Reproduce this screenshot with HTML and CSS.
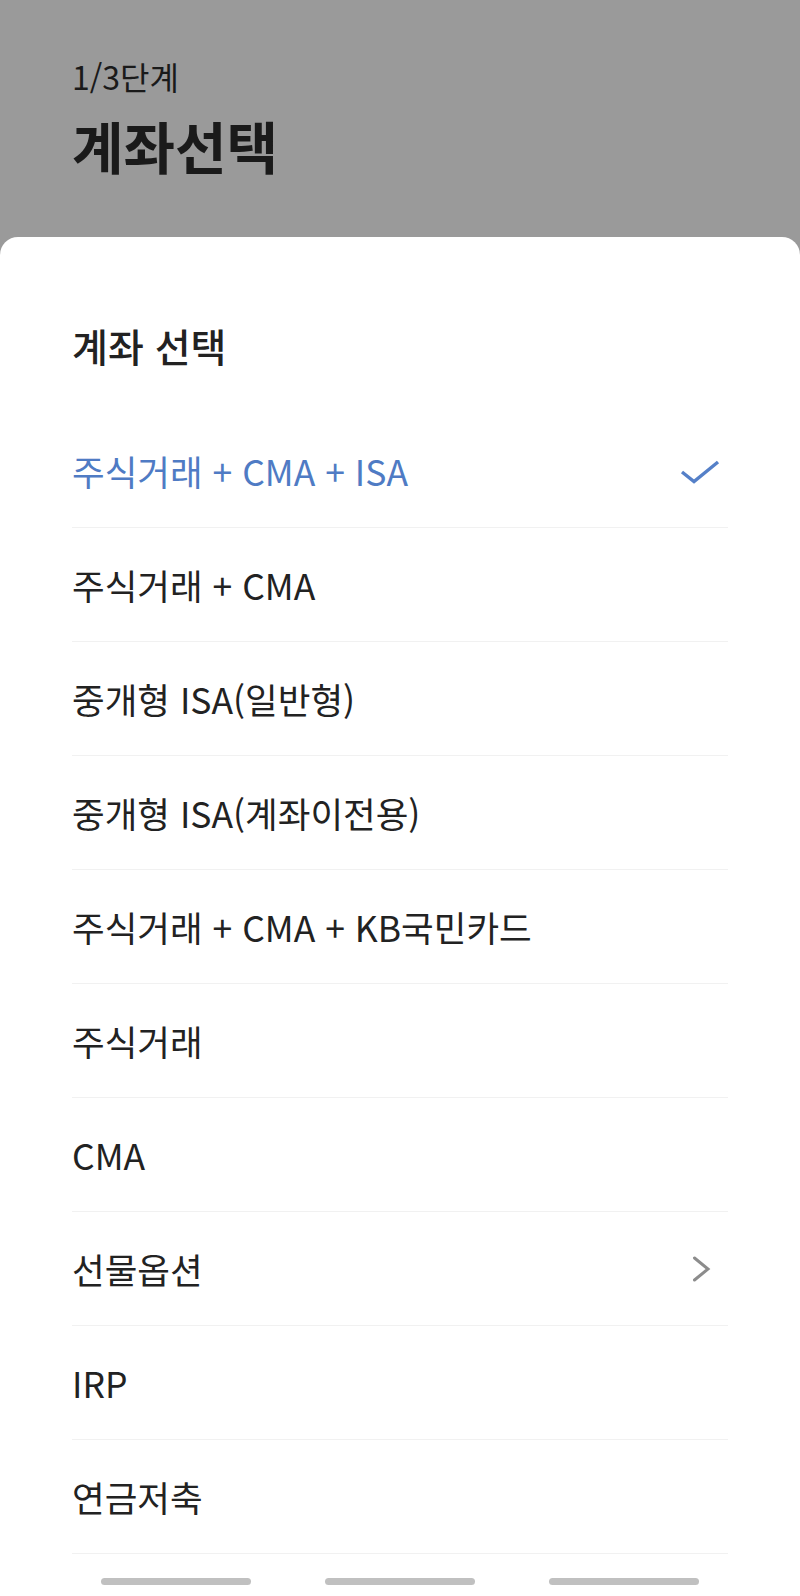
FILE: index.html
```html
<!DOCTYPE html>
<html lang="ko">
<head>
<meta charset="utf-8">
<title>계좌선택</title>
<link rel="stylesheet" href="styles.css">
</head>
<body>
<div class="screen">
  <header class="step">
    <p class="step-count">1/3단계</p>
    <h1 class="step-title">계좌선택</h1>
  </header>
  <section class="sheet">
    <h2 class="sheet-title">계좌 선택</h2>
    <ul class="options">
      <li class="option selected"><span class="label">주식거래 + CMA + ISA</span>
        <svg class="icon" viewBox="0 0 44 44" width="44" height="44"><polyline points="4,23 16,32.5 40,13" fill="none" stroke="#5580c8" stroke-width="3.4" stroke-linecap="butt" stroke-linejoin="miter"/></svg>
      </li>
      <li class="option"><span class="label">주식거래 + CMA</span></li>
      <li class="option"><span class="label">중개형 ISA(일반형)</span></li>
      <li class="option"><span class="label">중개형 ISA(계좌이전용)</span></li>
      <li class="option"><span class="label">주식거래 + CMA + KB국민카드</span></li>
      <li class="option"><span class="label">주식거래</span></li>
      <li class="option"><span class="label">CMA</span></li>
      <li class="option"><span class="label">선물옵션</span>
        <svg class="icon" viewBox="0 0 44 44" width="44" height="44"><polyline points="16.5,11 30,22 16.5,33" fill="none" stroke="#8c8c8c" stroke-width="3" stroke-linecap="round" stroke-linejoin="miter"/></svg>
      </li>
      <li class="option"><span class="label">IRP</span></li>
      <li class="option"><span class="label">연금저축</span></li>
    </ul>
    <div class="indicator"><span class="bar"></span><span class="bar"></span><span class="bar"></span></div>
  </section>
</div>
</body>
</html>
```

FILE: styles.css
```css
* { box-sizing: border-box; }
html, body {
  margin: 0;
  padding: 0;
  background: #9a9a9a;
}
body {
  font-family: "Noto Sans CJK KR", "Noto Sans", sans-serif;
  color: #222222;
}
.screen {
  width: 800px;
  min-height: 1596px;
  display: flex;
  flex-direction: column;
  background: #9a9a9a;
}
.step {
  padding: 56px 72px 59px;
  color: #1a1a1a;
}
.step-count {
  margin: 0;
  font-size: 32px;
  line-height: 40px;
  font-weight: 400;
}
.step-title {
  margin: 16px 0 0;
  font-size: 56px;
  line-height: 66px;
  font-weight: 700;
}
.sheet {
  flex: 1;
  background: #ffffff;
  border-radius: 18px 18px 0 0;
  padding: 80px 72px 0;
  display: flex;
  flex-direction: column;
}
.sheet-title {
  margin: 0 0 41px;
  font-size: 39px;
  line-height: 56px;
  font-weight: 500;
  color: #222222;
}
.options {
  list-style: none;
  margin: 0;
  padding: 0;
}
.option {
  height: 114px;
  border-bottom: 1.5px solid #f1f1f1;
  display: flex;
  align-items: center;
  justify-content: space-between;
  font-size: 35.5px;
  color: #222222;
}
.option.selected {
  color: #4f7bc4;
}
.option .icon {
  margin-right: 6px;
  flex: none;
}
.indicator {
  display: flex;
  justify-content: center;
  gap: 74px;
  padding-top: 24px;
}
.bar {
  width: 150px;
  height: 7px;
  border-radius: 4px;
  background: #c0c0c0;
}
```
